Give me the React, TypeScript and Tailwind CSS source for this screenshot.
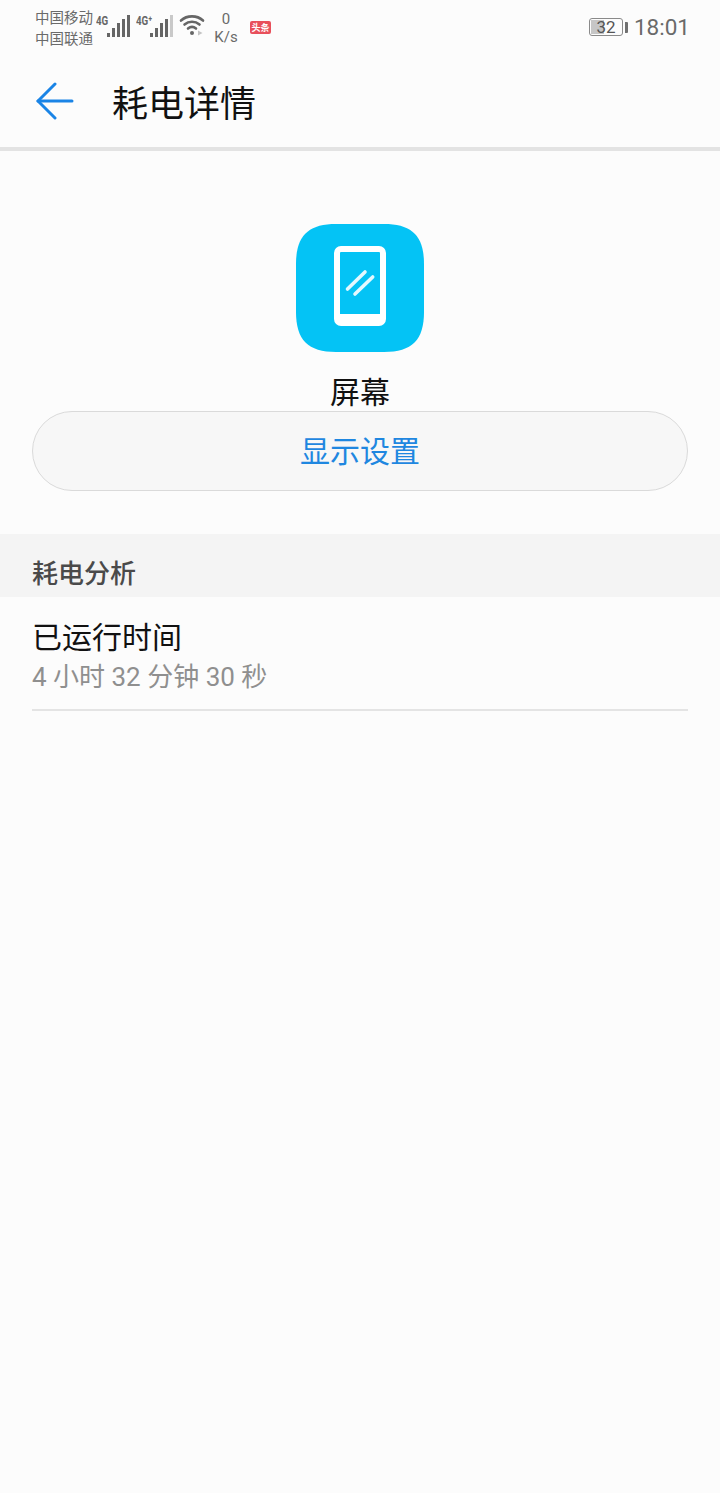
import React from 'react';

const CJK = "font-['Roboto','Noto_Sans_CJK_SC',sans-serif]";

function SignalBars({ label, width, lastDim }: { label: string; width: string; lastDim?: boolean }) {
  const heights = [4, 9, 14, 18, 22];
  return (
    <div className={`relative h-[24px] shrink-0 ${width}`}>
      <span className="absolute left-0 top-[1px] origin-left scale-x-75 whitespace-nowrap font-['Roboto',sans-serif] text-[13px] leading-[14px] font-bold text-[#666666]">
        {label}
      </span>
      <div className="absolute bottom-0 right-0 flex items-end gap-[2px]">
        {heights.map((h, i) => (
          <div
            key={h}
            className={`w-[3px] ${i === 4 && lastDim ? 'bg-[#c9c9c9]' : 'bg-[#666666]'}`}
            style={{ height: h }}
          />
        ))}
      </div>
    </div>
  );
}

function StatusBar() {
  return (
    <div className="flex h-[56px] items-start justify-between pl-[35px] pr-[30px]">
      <div className="flex items-start">
        <div className={`${CJK} mt-[8px] w-[61px] text-[14.5px] leading-[21px] text-[#6a6a6a]`}>
          <div>中国移动</div>
          <div>中国联通</div>
        </div>
        <div className="mt-[13px] flex gap-[6px]">
          <SignalBars label="4G" width="w-[34px]" />
          <SignalBars label="4G⁺" width="w-[37px]" lastDim />
        </div>
        <svg className="mt-[14px] ml-[6px]" width="28" height="24" viewBox="0 0 28 24" fill="none" stroke="#666666" strokeWidth="2.6" strokeLinecap="round">
          <path d="M2 6.5C8 1 18 1 24 6.5" />
          <path d="M5.5 10.5C9.8 6.8 16.2 6.8 20.5 10.5" />
          <path d="M9 14.5C11.5 12.4 14.5 12.4 17 14.5" />
          <circle cx="13" cy="19" r="2" fill="#666666" stroke="none" />
          <path d="M19 16.5l4.5 2.5-4.5 2.5z" fill="#c4c4c4" stroke="none" />
        </svg>
        <div className="mt-[10px] ml-[3px] w-[32px] text-center font-['Roboto',sans-serif] text-[15px] leading-[18px] text-[#6a6a6a]">
          <div>0</div>
          <div>K/s</div>
        </div>
        <div className="font-['Noto_Sans_CJK_SC',sans-serif] mt-[21px] ml-[8px] flex h-[13px] w-[21px] items-center justify-center rounded-[2px] bg-[#e8505b] text-[9px] font-bold leading-none text-white">
          头条
        </div>
      </div>
      <div className="flex items-center pt-[12px]">
        <div className="relative h-[18px] w-[34px] overflow-hidden rounded-[3px] border border-[#8a8a8a] p-[1px]">
          <div className="h-full w-[45%] bg-[#c6c6c6]" />
          <span className="absolute inset-0 text-center font-['Roboto',sans-serif] text-[17px] leading-[16px] text-[#555555]">32</span>
        </div>
        <div className="ml-[2px] h-[11px] w-[3px] rounded-r-[1px] bg-[#707070]" />
        <span className="ml-[6px] font-['Roboto',sans-serif] text-[22.5px] leading-[30px] text-[#6a6a6a]">18:01</span>
      </div>
    </div>
  );
}

export default function App() {
  return (
    <div className={`${CJK} h-[1493px] w-[720px] overflow-hidden bg-[#fcfcfc]`}>
      <StatusBar />

      {/* Title bar */}
      <div className="flex h-[95px] items-center border-b-[4px] border-[#e3e3e3] pl-[36px]">
        <svg className="mb-[2px]" width="38" height="38" viewBox="0 0 38 38" fill="none" stroke="#1a84e6" strokeWidth="3" strokeLinecap="round" strokeLinejoin="round">
          <path d="M36 19H2" />
          <path d="M19 2L2 19l17 17" />
        </svg>
        <h1 className="mt-[6px] ml-[38px] text-[36px] leading-[48px] font-normal text-[#111111]">耗电详情</h1>
      </div>

      {/* App icon */}
      <div className="flex flex-col items-center pt-[73px]">
        <svg width="128" height="128" viewBox="0 0 128 128" fill="none">
          <path d="M40 0H88C116 0 128 12 128 40V88C128 116 116 128 88 128H40C12 128 0 116 0 88V40C0 12 12 0 40 0Z" fill="#04c3f5" />
          <path fillRule="evenodd" clipRule="evenodd" d="M45 22h38a7 7 0 0 1 7 7v66a7 7 0 0 1-7 7H45a7 7 0 0 1-7-7V29a7 7 0 0 1 7-7zM45 28a1 1 0 0 0-1 1v61h40V29a1 1 0 0 0-1-1z" fill="#ffffff" />
          <path d="M51.5 65L69 48M59 70L76.7 53" stroke="#e4f8fe" strokeWidth="3.6" strokeLinecap="round" />
        </svg>
        <div className="mt-[22px] text-[30px] leading-[37px] text-[#111111]">屏幕</div>
      </div>

      {/* Button */}
      <div className="px-[32px]">
        <button className="h-[80px] w-full rounded-full border border-[#dadada] bg-[#f7f7f7] text-[30px] text-[#1f87e0]">
          显示设置
        </button>
      </div>

      {/* Section header */}
      <div className="mt-[43px] flex h-[63px] items-end bg-[#f4f4f4] pb-[5px] pl-[32px]">
        <span className="text-[26px] leading-[36px] font-medium text-[#4a4a4a]">耗电分析</span>
      </div>

      {/* Row */}
      <div className="mx-[32px] h-[114px] border-b-2 border-[#e4e4e4] pt-[21px]">
        <div className="text-[30px] leading-[40px] text-[#111111]">已运行时间</div>
        <div className="mt-[1px] text-[26px] leading-[36px] text-[#8f8f8f]">4 小时 32 分钟 30 秒</div>
      </div>
    </div>
  );
}
